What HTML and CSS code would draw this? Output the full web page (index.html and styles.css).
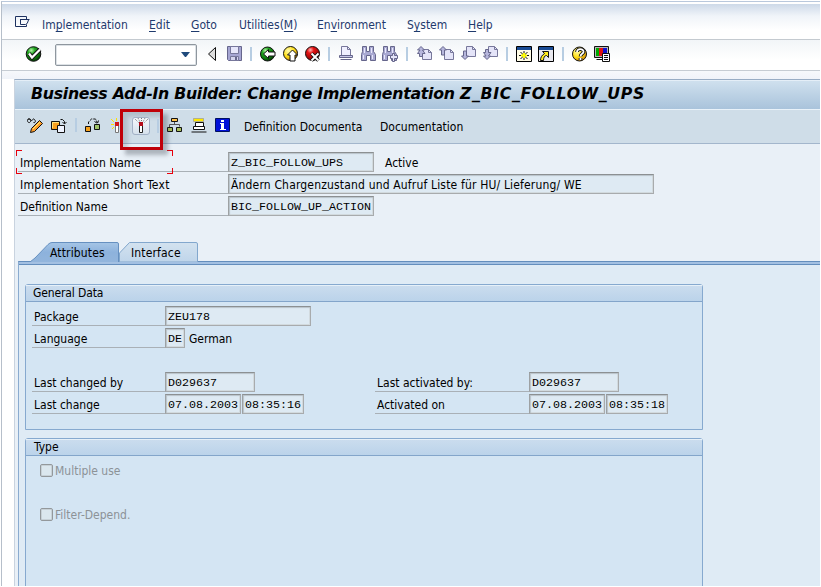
FILE: index.html
```html
<!DOCTYPE html>
<html lang="en">
<head>
<meta charset="utf-8">
<title>Business Add-In Builder</title>
<link rel="stylesheet" href="styles.css">
</head>
<body>
<svg class="defs" width="0" height="0">
  <defs>
    <radialGradient id="gr" cx=".35" cy=".25" r=".8"><stop offset="0" stop-color="#b8f5a8"/><stop offset=".3" stop-color="#22a822"/><stop offset=".7" stop-color="#0c7a0c"/><stop offset="1" stop-color="#032f03"/></radialGradient>
    <radialGradient id="ye" cx=".35" cy=".3" r=".8"><stop offset="0" stop-color="#fffbb0"/><stop offset=".5" stop-color="#ffe11a"/><stop offset="1" stop-color="#c97a00"/></radialGradient>
    <radialGradient id="re" cx=".35" cy=".25" r=".8"><stop offset="0" stop-color="#ffb4b4"/><stop offset=".3" stop-color="#e81414"/><stop offset="1" stop-color="#7a0000"/></radialGradient>
    <g id="page"><path d="M5.500 3.500v10h9V6.500l-3-3h-6z" fill="#e4e4f8" stroke="#77779b"/><path d="M11.500 3.500v3h3" fill="none" stroke="#77779b"/></g>
    <g id="bino"><path d="M1.500 .500h4v5h3v-5h4v5l2 3v6h-5v-5h-4v5h-5v-6l1-3z" fill="#a9a9d2" stroke="#66668c"/><path d="M3.500 2v5M2.500 9v4M10.500 2v5M11.500 9v4" stroke="#e8e8fc"/></g>
  </defs>
</svg>
<div class="window">
  <nav class="menubar">
    <svg class="sysmenu" width="16" height="14" viewBox="0 0 16 14"><path d="M11.500 3v-2.500h-11v10h11v-2M10.500 3.500h4M5.500 4v4.500h5q2 0 3-4.500M5 3.500h6" fill="none" stroke="#1d3160"/></svg>
    <span class="m1">Im<u>p</u>lementation</span><span class="m2"><u>E</u>dit</span><span class="m3"><u>G</u>oto</span><span class="m4">Utilities(<u>M</u>)</span><span class="m5">En<u>v</u>ironment</span><span class="m6">S<u>y</u>stem</span><span class="m7"><u>H</u>elp</span>
  </nav>
  <div class="toolbar">
    <svg class="ok" width="17" height="16" viewBox="0 0 17 16"><circle cx="8.500" cy="8" r="7.300" fill="url(#gr)" stroke="#111" stroke-width="1"/><path d="M4 7.500l3 4L15 3.500" fill="none" stroke="#111" stroke-width="4"/><path d="M4 7.500l3 4L15 3.500" fill="none" stroke="#fff" stroke-width="2.200"/></svg>
    <div class="command"><i></i></div>
    <svg class="tri" width="10" height="16" viewBox="0 0 10 16"><path d="M8.500 1.500v13L1.500 8z" fill="#ddd" stroke="#111"/></svg>
    <svg class="save" width="16" height="16" viewBox="0 0 16 16"><path d="M.5.500h14v14H1.500l-1-1z" fill="#a5a5d2" stroke="#66668c"/><path d="M3.500 .500h8v7h-8z" fill="#e6e6fa" stroke="#77779b"/><path d="M3.500 10.500h8v4h-8z" fill="#d5d5ee" stroke="#77779b"/><path d="M8 11h2v3H8z" fill="#66668c"/></svg>
    <b></b>
    <svg class="g1" width="16" height="16" viewBox="0 0 16 16"><circle cx="7.500" cy="8" r="7" fill="url(#gr)" stroke="#111"/><path d="M3.500 8l5-4.500v2.500h6.500v4H8.500v2.500z" fill="#fff" stroke="#111"/></svg>
    <svg class="g2" width="16" height="16" viewBox="0 0 16 16"><circle cx="7.500" cy="7.500" r="7" fill="url(#ye)" stroke="#111"/><path d="M9.500 4l5 5H12v6H7V9H4.500z" fill="#fff" stroke="#111"/></svg>
    <svg class="g3" width="16" height="16" viewBox="0 0 16 16"><circle cx="7.500" cy="7.500" r="7" fill="url(#re)" stroke="#111"/><path d="M6.500 7.500l7 7M13.500 7.500l-7 7" stroke="#111" stroke-width="3.600"/><path d="M6.500 7.500l7 7M13.500 7.500l-7 7" stroke="#fff" stroke-width="1.800"/></svg>
    <b></b>
    <svg class="g4" width="16" height="16" viewBox="0 0 16 16"><path d="M3.500 9.500v-9h6l3 3v6" fill="#f0f0ff" stroke="#77779b"/><path d="M9.500 .500v3h3" fill="none" stroke="#77779b"/><path d="M1.500 9.500h13v2h-13zM2.500 13.500h11" fill="#c6c6e6" stroke="#66668c"/></svg>
    <svg class="g5" width="16" height="16" viewBox="0 0 16 16"><use href="#bino"/></svg>
    <svg class="g6" width="17" height="16" viewBox="0 0 17 16"><use href="#bino"/><path d="M10.500 7.500h2v2h3v3h-3v3h-2v-3h-2v-3h2z" fill="#e4e4f8" stroke="#66668c"/></svg>
    <b></b>
    <svg class="g7" width="16" height="16" viewBox="0 0 16 16"><use href="#page"/><path d="M4 .5l3.500 3.500H5.500L8 7.500H5.500v3h-3v-3H.5L3 4H.5z" fill="#b6b6dc" stroke="#66668c"/></svg>
    <svg class="g8" width="16" height="16" viewBox="0 0 16 16"><use href="#page"/><path d="M4 .5l3.500 3.500H5.500v5h-3V4H.5z" fill="#b6b6dc" stroke="#66668c"/></svg>
    <svg class="g9" width="16" height="16" viewBox="0 0 16 16"><use href="#page" y="-3"/><path d="M4 13.500l3.500-3.500H5.500V5h-3v5H.5z" fill="#b6b6dc" stroke="#66668c"/></svg>
    <svg class="g10" width="16" height="16" viewBox="0 0 16 16"><use href="#page" y="-3"/><path d="M4 13.500l3.500-3.500H5.500L8 6.500H5.500v-3h-3v3H.5L3 10H.5z" fill="#b6b6dc" stroke="#66668c"/></svg>
    <b></b>
    <svg class="g11" width="16" height="16" viewBox="0 0 16 16"><path d="M.5.500h15v15H.500z" fill="#fffce6" stroke="#000"/><path d="M1 1h14v3H1z" fill="#184a94"/><path d="M8 5v9M3 9.500h10M4.500 6l7 7M11.500 6l-7 7" stroke="#111"/><path d="M5 9.500h6M8 7v5" stroke="#ff0" stroke-width="2"/></svg>
    <svg class="g12" width="16" height="16" viewBox="0 0 16 16"><path d="M.5.500h15v15H.500z" fill="#e8e8ee" stroke="#000"/><path d="M1 1h14v3H1z" fill="#184a94"/><path d="M4.500 5.500h6v6l-2-2c-2 0-3 2-3 5h-3c0-3 1-5 4-7z" fill="#ffeb1c" stroke="#111"/></svg>
    <b></b>
    <svg class="g13" width="16" height="16" viewBox="0 0 16 16"><circle cx="7.500" cy="8" r="7" fill="url(#ye)" stroke="#111"/><path d="M5 6c0-4 7-3.500 6.500 0C11 8 8.500 7.500 8.500 10.500M8.500 12v2" fill="none" stroke="#111" stroke-width="3.600"/><path d="M5 6c0-4 7-3.500 6.500 0C11 8 8.500 7.500 8.500 10.500M8.500 12v2" fill="none" stroke="#fff" stroke-width="1.800"/></svg>
    <svg class="g14" width="16" height="16" viewBox="0 0 16 16"><path d="M.5.500h14v11H.500zM2.500 13.500h7" fill="#b8b8b8" stroke="#111"/><path d="M2 2h3v8H2z" fill="#0a0"/><path d="M5 2h4v8H5z" fill="#e01010"/><path d="M9 2h4v8H9z" fill="#11c"/><path d="M8.500 7.500h7v8h-7z" fill="#fff" stroke="#111"/><path d="M10 9.500h4M10 11.500h4M10 13.500h4" stroke="#111"/></svg>
  </div>
  <div class="gap"></div>
  <main class="screen">
    <h1>Business Add-In Builder: Change Implementation <span>Z_BIC_FOLLOW_UPS</span></h1>
    <div class="apptools">
      <svg class="a1" width="17" height="16" viewBox="0 0 17 16"><path d="M1.500 1.500c2-2 4 0 3 2s-3 1-3-1 3-1 4 0 1-3 3-1 0 4-1 3" fill="none" stroke="#111"/><path d="M4.500 14.500l1-4 8-8 3 3-8 8z" fill="#fd9d2c" stroke="#111"/><path d="M7 11l7-7" stroke="#fff06a"/></svg>
      <svg class="a2" width="16" height="16" viewBox="0 0 16 16"><path d="M.5 3.500h8v8h-8z" fill="#f8a020" stroke="#111"/><path d="M1.500 10V4.500H8" fill="none" stroke="#ffe27a"/><path d="M6.500 7.500h7v7h-7z" fill="#eef3ff" stroke="#111"/><path d="M9.500 1.500h2l2 2v2M11.500 4l2 2 2-2" fill="none" stroke="#111"/></svg>
      <b></b>
      <svg class="a3" width="16" height="16" viewBox="0 0 16 16"><path d="M3.500 6V4l3-3h4l2 4M9.500 3.500l3 2 1-3" fill="none" stroke="#111" stroke-dasharray="3 1"/><path d="M.5 8.500h5v5h-5z" fill="#f5a01a" stroke="#111"/><path d="M9.500 6.500h5v5h-5z" fill="#9fc468" stroke="#111"/></svg>
      <svg class="a4" width="8" height="16" viewBox="0 0 8 16"><path d="M0 1l3 3M5.500 0v3M0 6.500h3M1 11l2-2" stroke="#ffe000"/><path d="M4.500 5.500h3v9h-3z" fill="#fff" stroke="#777"/><path d="M4 4h4v4H4z" fill="#d01818"/></svg>
      <div class="highlight"><span><svg width="16" height="16" viewBox="0 0 16 16"><path d="M2 1l4 4M5 0l2 4M8.500 0v4M12 0l-2 4M15 1l-4 4" stroke="#777" stroke-dasharray="1 1"/><path d="M6.500 5.500h3v9h-3z" fill="#fff" stroke="#222"/><path d="M6 4h4v4H6z" fill="#b40d1a"/></svg></span></div>
      <svg class="a6" width="16" height="16" viewBox="0 0 16 16"><path d="M7.500 4v3M2.500 9V6.500h10v2" fill="none" stroke="#555"/><path d="M4.500 .500h6v3h-6z" fill="#ffc04a" stroke="#111"/><path d="M.5 9.500h5v4h-5zM9.500 9.500h5v4h-5z" fill="#a8bf5a" stroke="#111"/></svg>
      <svg class="a7" width="16" height="16" viewBox="0 0 16 16"><path d="M2.500 .500h10v3h-10z" fill="#ffe800" stroke="#999" stroke-width=".7"/><path d="M4.500 4.500h8v4h-8zM2.500 8.500h11v3h-11zM.5 14h15" fill="#fff" stroke="#111"/></svg>
      <svg class="a8" width="16" height="16" viewBox="0 0 16 16"><path d="M.5.500h14v13H.500z" fill="#0010d8" stroke="#001060"/><path d="M6 2h3v2H6zM5 5h4v6h2v1H5v-1h1V6H5z" fill="#fff"/></svg>
      <span class="t1">Definition Documenta</span><span class="t2">Documentation</span>
    </div>
    <section class="header">
      <div class="row"><label class="focus">Implementation Name</label><output class="w146">Z_BIC_FOLLOW_UPS</output><span class="after">Active</span></div>
      <div class="row"><label class="wide">Implementation Short Text</label><output class="w426 sans">Ändern Chargenzustand und Aufruf Liste für HU/ Lieferung/ WE</output></div>
      <div class="row"><label>Definition Name</label><output class="w146">BIC_FOLLOW_UP_ACTION</output></div>
    </section>
    <div class="tabs">
      <svg width="182" height="20" viewBox="0 0 182 20">
        <defs><linearGradient id="tb" x2="0" y2="1"><stop stop-color="#d3e2ef"/><stop offset="1" stop-color="#bfd5ea"/></linearGradient><linearGradient id="ta" x2="0" y2="1"><stop stop-color="#a5c5e6"/><stop offset=".5" stop-color="#8db2dc"/><stop offset="1" stop-color="#92b5dc"/></linearGradient></defs>
        <path d="M11 20l5-4L29 2.500Q31 .500 33 .500H98q1.500 0 1.500 1.500v18" fill="url(#ta)" stroke="#6690c0"/>
        <path d="M100.500 11l10-10.500H177q1.500 0 1.500 1.500v18H100.500z" fill="url(#tb)" stroke="#82a7cd"/>
      </svg>
      <span class="tab1">Attributes</span><span class="tab2">Interface</span>
    </div>
    <div class="pane">
      <section class="group g-data">
        <h2 class="tight">General Data</h2>
        <div class="form">
          <div class="row"><label>Package</label><output class="w146">ZEU178</output></div>
          <div class="row"><label>Language</label><output class="w20">DE</output><span class="lang">German</span></div>
          <div class="pair">
            <div>
              <div class="row"><label>Last changed by</label><output class="w90">D029637</output></div>
              <div class="row"><label>Last change</label><output class="w76">07.08.2003</output><output class="w62">08:35:16</output></div>
            </div>
            <div class="right">
              <div class="row"><label>Last activated by:</label><output class="w90">D029637</output></div>
              <div class="row"><label>Activated on</label><output class="w76">07.08.2003</output><output class="w62">08:35:18</output></div>
            </div>
          </div>
        </div>
      </section>
      <section class="group g-type">
        <h2>Type</h2>
        <div class="check"><i></i>Multiple use</div>
        <div class="check"><i></i>Filter-Depend.</div>
      </section>
    </div>
  </main>
</div>
</body>
</html>
```
FILE: styles.css
```css
* { box-sizing: border-box; }
body { margin: 0; height: 587px; overflow: hidden; background: #fff; font: 12px/16px "DejaVu Sans Condensed", "DejaVu Sans", sans-serif; font-stretch: condensed; color: #000; }
.defs { position: absolute; }
svg { display: block; flex: none; }
.window { width: 819px; margin: 1px 0 0 1px; height: 585px; overflow: hidden; border-top: 1px solid #b9c8dc; border-left: 1px solid #b6bfca; background: #fff; }
.menubar { height: 38px; border-top: 2px solid #fff; border-bottom: 1px solid #c4cad0; background: linear-gradient(#cdd9e8, #f0f4f9 12px, #fff 26px); display: flex; padding-top: 13px; color: #1f3a6d; white-space: nowrap; }
.menubar span { flex: none; line-height: 16px; }
.menubar u { text-underline-offset: 2px; }
.sysmenu { margin: -1px 12px 0 13px; }
.m1 { width: 107px; margin-left: -1px; } .m2 { width: 42px; } .m3 { width: 48px; } .m4 { width: 78px; } .m5 { width: 90px; } .m6 { width: 61px; }
.toolbar { height: 31px; border-bottom: 1px solid #c6ccd3; background: linear-gradient(#f2f5f8, #fff 20px); display: flex; align-items: flex-start; padding: 6px 0 0 23px; }
.toolbar b, .apptools b { flex: none; width: 2px; height: 14px; background: #b7cde2; }
.toolbar b { margin-top: 1px; }
.command { width: 142px; height: 22px; margin: -2px 10px 0 13px; border: 1px solid #8e969e; border-radius: 2px; background: #fff; box-shadow: inset 0 0 0 1px #dde2e6; padding: 7px 0 0 125px; }
.command i { display: block; width: 9px; border: 4.500px solid transparent; border-top: 5px solid #1f4a7c; border-bottom: 0; }
.tri { margin-right: 10px; } .save { margin-right: 7px; }
.g1 { margin: 0 7px 0 8px; } .g2 { margin-right: 6px; } .g3 { margin-right: 7px; }
.g4 { margin: 0 7px 0 8px; } .g5 { margin-right: 5px; } .g6 { margin-right: 7px; }
.g7 { margin: 0 6px 0 9px; } .g8 { margin-right: 6px; } .g9 { margin-right: 6px; } .g10 { margin-right: 7px; }
.g11 { margin: 0 6px 0 8px; } .g12 { margin-right: 8px; }
.g13 { margin: 0 6px 0 8px; }
.gap { height: 8px; background: linear-gradient(#f6f8fb, #f0f3f9); }
.screen { margin-left: 12px; border-left: 1px solid #c9d3df; border-top: 1px solid #98acc4; height: 508px; background: #e9f0f7; }
h1 { margin: 0; height: 30px; border-top: 1px solid #e4eef7; border-bottom: 1px solid #e9f2f9; background: linear-gradient(#cfe0ee, #a9c3db); font: italic bold 15.750px/26px "DejaVu Sans", sans-serif; font-stretch: normal; letter-spacing: -.27px; color: #000; padding-left: 16px; white-space: nowrap; }
h1 span { letter-spacing: .66px; }
.apptools { height: 34px; background: #cfdde8; border-bottom: 1px solid #a3b6cc; display: flex; padding: 8px 0 0 11px; white-space: nowrap; line-height: 18px; }
.a1 { margin-right: 8px; } .a2 { margin-right: 8px; } .a3 { margin: 0 10px 0 8px; }
.highlight { flex: none; width: 43px; height: 41px; margin: -9px 4px 0 1px; border: 3px solid #c00008; position: relative; z-index: 2; box-shadow: 5px 5px 4px rgba(60, 70, 80, .35), inset 5px 5px 4px rgba(60, 70, 80, .2); padding: 5px 0 0 9px; }
.highlight::after { content: ""; position: absolute; left: 34px; top: 7px; width: 2px; height: 14px; background: #b7cde2; }
.highlight span { display: block; width: 18px; height: 18px; border: 1px solid #a3b1c6; border-radius: 3px; background: linear-gradient(#f4f8fc, #d6e1ec); }
.a6 { margin-right: 8px; } .a7 { margin-right: 8px; } .a8 { margin-right: 13px; }
.t1 { width: 136px; }
.header { padding: 8px 0 0 3px; height: 98px; }
.row { display: flex; height: 20px; margin-bottom: 2px; white-space: nowrap; }
label { flex: none; border-bottom: 1px solid #a9b0b6; line-height: 22px; padding-left: 2px; position: relative; }
.header label { width: 210px; }
.wide { letter-spacing: .26px; }
.focus::before { content: ""; position: absolute; left: -2px; top: -2px; width: 157px; height: 24px; --c: #e8000c; background: linear-gradient(var(--c), var(--c)) 0 0/6px 1px, linear-gradient(var(--c), var(--c)) 0 0/1px 6px, linear-gradient(var(--c), var(--c)) 100% 0/6px 1px, linear-gradient(var(--c), var(--c)) 100% 0/1px 6px, linear-gradient(var(--c), var(--c)) 0 100%/6px 1px, linear-gradient(var(--c), var(--c)) 0 100%/1px 6px, linear-gradient(var(--c), var(--c)) 100% 100%/6px 1px, linear-gradient(var(--c), var(--c)) 100% 100%/1px 6px; background-repeat: no-repeat; }
output { flex: none; height: 20px; border: 1px solid #a8abad; border-top-color: #8c9092; border-left-color: #9da1a3; box-shadow: inset 1px 1px 1px #b9c2c9, inset -1px -1px 0 #d2dade; background: #deeaf3; font: 11.667px/20px "Liberation Mono", monospace; padding-left: 2px; }
output.sans { font: 12px/20px "DejaVu Sans Condensed", "DejaVu Sans", sans-serif; letter-spacing: .17px; }
output + output { margin-left: 1px; }
.w146 { width: 146px; } .w426 { width: 426px; } .w20 { width: 20px; } .w90 { width: 90px; } .w76 { width: 76px; } .w62 { width: 62px; }
.after { margin-left: 11px; line-height: 22px; } .lang { margin-left: 4px; line-height: 22px; }
.tabs { position: relative; height: 19px; padding-left: 4px; }
.tabs span { position: absolute; top: 3px; letter-spacing: .15px; }
.tab1 { left: 35px; } .tab2 { left: 116px; }
.pane { margin-left: 3px; height: 340px; border-left: 1px solid #8aabd0; border-top: 1px solid #648ebd; box-shadow: inset 0 2px #a3c0e2, inset 0 3px #648ebd; background: #dfebf5; padding: 22px 0 0 6px; }
.group { width: 678px; border: 1px solid #86a9cf; border-radius: 3px 3px 0 0; background: #d4e5f3; }
h2 { margin: 0; height: 17px; font: inherit; line-height: 14px; padding-left: 8px; border-top: 1px solid #e6f0f8; border-bottom: 1px solid #83a5ca; background: linear-gradient(#cadcee, #bbd3ea); }
h2.tight { padding-left: 7px; letter-spacing: -.12px; }
.g-data { height: 146px; margin-bottom: 8px; } .g-type { height: 200px; }
.form { padding: 4px 0 0 6px; }
.form label { width: 133px; }
.pair { display: flex; padding-top: 22px; }
.right { margin-left: 71px; } .right label { width: 154px; }
.check { display: flex; height: 44px; padding: 7px 0 0 14px; color: #8c9297; }
.check i { width: 13px; height: 13px; margin: 1px 2px 0 0; border: 1px solid #93989b; border-radius: 2px; background: #dbe7ee; box-shadow: inset 0 0 0 1px #c7d1d7; }
```
